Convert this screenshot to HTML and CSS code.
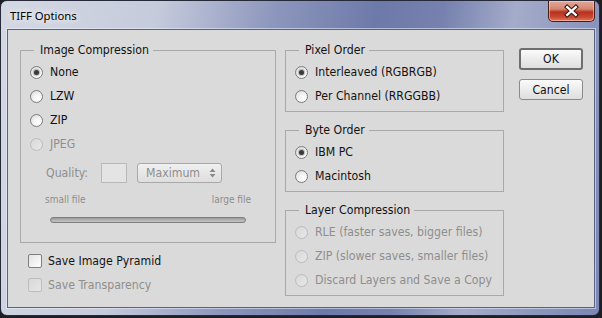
FILE: index.html
```
<!DOCTYPE html>
<html>
<head>
<meta charset="utf-8">
<link rel="stylesheet" href="styles.css">
</head>
<body>
<div class="window">
  <div class="titlebar">
    <span class="title">TIFF Options</span>
    <span class="close">
      <svg width="47" height="20" viewBox="0 0 47 20">
        <path d="M19 6 L28 14 M28 6 L19 14" stroke="#3a1410" stroke-width="4.6" stroke-linecap="square"/>
        <path d="M19 6 L28 14 M28 6 L19 14" stroke="#ffffff" stroke-width="2.4" stroke-linecap="square"/>
      </svg>
    </span>
  </div>
  <div class="client">
    <div class="col-left">
      <fieldset class="group group-img">
        <legend>Image Compression</legend>
        <div class="row"><span class="radio on"></span><span class="lbl">None</span></div>
        <div class="row"><span class="radio"></span><span class="lbl">LZW</span></div>
        <div class="row"><span class="radio"></span><span class="lbl">ZIP</span></div>
        <div class="row dis"><span class="radio"></span><span class="lbl">JPEG</span></div>
        <div class="quality dis">
          <span class="qlabel">Quality:</span>
          <span class="qbox"></span>
          <span class="select">Maximum<svg class="arrows" width="7" height="10" viewBox="0 0 7 10"><path d="M3.5 0.5 L6.5 4 L0.5 4 Z M0.5 6 L6.5 6 L3.5 9.5 Z" fill="#8a8a8a"/></svg></span>
        </div>
        <div class="filesize"><span>small file</span><span>large file</span></div>
        <div class="track"></div>
      </fieldset>
      <div class="checks">
        <div class="row"><span class="check"></span><span class="lbl">Save Image Pyramid</span></div>
        <div class="row dis"><span class="check"></span><span class="lbl">Save Transparency</span></div>
      </div>
    </div>
    <div class="col-right">
      <fieldset class="group">
        <legend>Pixel Order</legend>
        <div class="row"><span class="radio on"></span><span class="lbl">Interleaved (RGBRGB)</span></div>
        <div class="row"><span class="radio"></span><span class="lbl">Per Channel (RRGGBB)</span></div>
      </fieldset>
      <fieldset class="group">
        <legend>Byte Order</legend>
        <div class="row"><span class="radio on"></span><span class="lbl">IBM PC</span></div>
        <div class="row"><span class="radio"></span><span class="lbl">Macintosh</span></div>
      </fieldset>
      <fieldset class="group">
        <legend>Layer Compression</legend>
        <div class="row dis"><span class="radio"></span><span class="lbl">RLE (faster saves, bigger files)</span></div>
        <div class="row dis"><span class="radio"></span><span class="lbl">ZIP (slower saves, smaller files)</span></div>
        <div class="row dis"><span class="radio"></span><span class="lbl">Discard Layers and Save a Copy</span></div>
      </fieldset>
    </div>
    <div class="col-buttons">
      <div class="btn default">OK</div>
      <div class="btn">Cancel</div>
    </div>
  </div>
</div>
</body>
</html>
```
FILE: styles.css
```
* { box-sizing: border-box; }
html, body { margin: 0; padding: 0; }
body {
  width: 602px;
  height: 318px;
  background: #1e1f24;
  font-family: "DejaVu Sans Condensed", "DejaVu Sans", sans-serif;
  font-size: 12.2px;
  color: #121212;
  overflow: hidden;
}
.window {
  width: 600px;
  height: 316px;
  border: 1px solid #262a38;
  border-radius: 7px;
  background: linear-gradient(100deg, #d4d8e3 0%, #c6cbdc 24%, #8d97bd 42%, #6d79a9 58%, #7681ae 68%, #a4acca 79%, #8f99be 89%, #7a86b4 100%);
  display: flex;
  flex-direction: column;
  overflow: hidden;
}
.titlebar {
  height: 29px;
  flex: none;
  display: flex;
  justify-content: space-between;
  align-items: flex-start;
}
.title {
  margin: 8px 0 0 9px;
  font-family: "Noto Sans", "Open Sans", sans-serif;
  font-size: 11.3px;
  line-height: 14px;
  color: #000;
  text-shadow: 0 0 6px #fff, 0 0 10px rgba(255,255,255,0.9);
}
.close {
  margin-right: 4px;
  width: 47px;
  height: 21px;
  border: 1px solid #4a1c18;
  border-top: none;
  border-radius: 0 0 5px 5px;
  background: linear-gradient(#e2a898 0%, #d48672 40%, #b8301e 55%, #c84830 80%, #e07a5e 100%);
  box-shadow: inset 0 0 0 1px rgba(255,220,210,0.5);
  display: flex;
}
.client {
  flex: none;
  margin: 0 5px 0 7px;
  height: 277px;
  background: #dadada;
  box-shadow: 0 0 0 1px #59627e, 0 0 0 2px rgba(235,240,255,0.55);
  display: flex;
  padding: 13px 0 0 12px;
}
.col-left { width: 256px; display: flex; flex-direction: column; }
.col-right { width: 219px; margin-left: 9px; display: flex; flex-direction: column; gap: 11px; }
.col-buttons { width: 64px; margin-left: 15px; padding-top: 5px; display: flex; flex-direction: column; gap: 9px; }

.group {
  margin: 0;
  border: 1px solid #a9a9a9;
  padding: 3px 9px 3px 9px;
  min-width: 0;
}
.group legend {
  margin-left: 4px;
  padding: 0 4px 0 6px;
  line-height: 14px;
  height: 14px;
  color: #111;
}
.group-img { padding-bottom: 19px; }
.row {
  height: 24px;
  display: flex;
  align-items: center;
}
.lbl { margin-left: 7px; white-space: nowrap; }
.dis { color: #8e8e8e; }

.radio {
  width: 13px;
  height: 13px;
  flex: none;
  border-radius: 50%;
  border: 1px solid #7c7c7c;
  background: radial-gradient(circle at 65% 70%, #ffffff 0%, #f2f2f2 45%, #d2d2d2 100%);
  display: flex;
  align-items: center;
  justify-content: center;
}
.radio.on::after {
  content: "";
  width: 5px;
  height: 5px;
  border-radius: 50%;
  background: #3a3a3a;
  box-shadow: 0 0 1px 1px rgba(60,60,60,0.35);
}
.dis .radio {
  border-color: #bcbcbc;
  background: linear-gradient(135deg, #d8d8d8, #e8e8e8);
}

.quality {
  margin-top: 7px;
  height: 20px;
  display: flex;
  align-items: center;
  padding-left: 16px;
}
.qlabel { width: 55px; }
.qbox {
  width: 26px;
  height: 20px;
  border: 1px solid #b9b9b9;
  background: #e4e4e4;
}
.select {
  margin-left: 10px;
  width: 85px;
  height: 20px;
  border: 1px solid #a9a9a9;
  border-radius: 3px;
  background: linear-gradient(#f0f0f0, #dedede);
  display: flex;
  align-items: center;
  justify-content: space-between;
  padding: 0 5px 0 8px;
  color: #8e8e8e;
}
.arrows { flex: none; }
.filesize {
  margin-top: 11px;
  height: 12px;
  line-height: 12px;
  font-size: 10px;
  display: flex;
  justify-content: space-between;
  padding: 0 15px 0 15px;
  color: #8e8e8e;
}
.track {
  margin: 11px 20px 0 20px;
  height: 6px;
  border: 1px solid #7e7e7e;
  border-radius: 3px;
  background: linear-gradient(#9c9c9c, #c4c4c4);
}

.checks { margin-top: 6px; padding-left: 8px; }
.check {
  width: 14px;
  height: 14px;
  flex: none;
  border: 1px solid #7f7f7f;
  border-radius: 2px;
  background: linear-gradient(135deg, #e2e2e2, #ffffff);
}
.checks .lbl { margin-left: 6px; }
.checks .dis .check {
  border-color: #bdbdbd;
  background: linear-gradient(135deg, #d8d8d8, #e6e6e6);
}

.btn {
  height: 21px;
  border: 1px solid #8a8a8a;
  border-radius: 3px;
  background: linear-gradient(#fafafa, #ececec 50%, #dedede);
  display: flex;
  align-items: center;
  justify-content: center;
  color: #101010;
}
.btn.default {
  height: 22px;
  border: 2px solid #6e6e6e;
  border-radius: 3px;
}
```
